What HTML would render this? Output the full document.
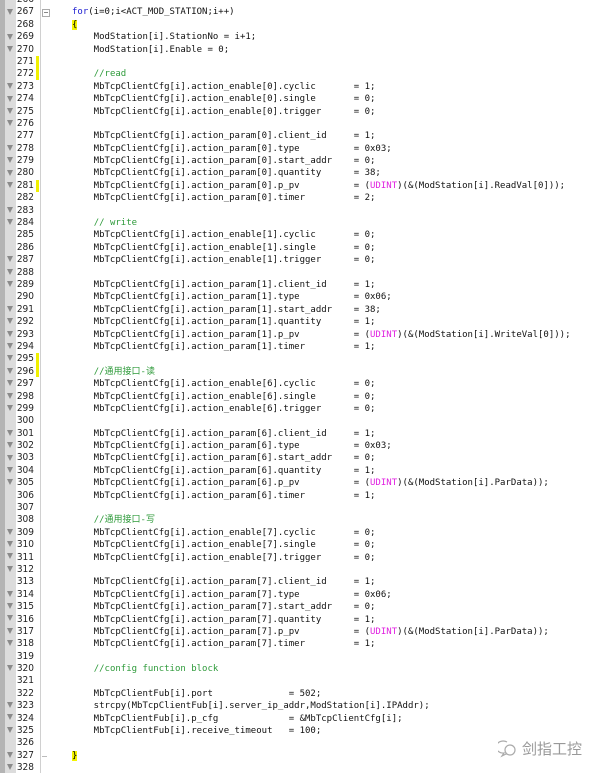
<!DOCTYPE html>
<html><head><meta charset="utf-8"><style>
*{margin:0;padding:0}
body{width:600px;height:773px;background:#fff;overflow:hidden;position:relative;font-family:"DejaVu Sans Mono","Liberation Mono","Noto Sans CJK SC",monospace;font-size:9px;color:#111}
#bar{position:absolute;left:0;top:0;width:16px;height:773px;background:#dcdcdc;border-left:5px solid #b4b4b4;box-sizing:border-box}
#vl{position:absolute;left:40px;top:0;width:1px;height:773px;background:#d0d0d0}
#nums{position:absolute;left:16px;top:-6px;width:18px;text-align:right;line-height:12.39px;font-family:"Liberation Sans Narrow","DejaVu Sans Condensed","Liberation Sans",sans-serif;font-size:10px;color:#222}
#code{position:absolute;left:72px;top:-6px;line-height:12.39px;white-space:pre}
.t{position:absolute;left:7px;width:0;height:0;border-left:3.5px solid transparent;border-right:3.5px solid transparent;border-top:6px solid #8a8a8a}
.y{position:absolute;left:36px;width:3px;background:#f0f000}
.k{color:#1a1ad0}.c{color:#2e9a3a}.m{color:#e020e0}.h{background:#f4f400;color:#000}
#wm{position:absolute;left:522px;top:738px;font-family:"Noto Sans CJK SC",sans-serif;font-size:15px;color:#999}
</style></head><body>
<div id="bar"></div><div id="vl"></div>
<div style="position:absolute;left:42px;top:9px;width:6px;height:6px;border:1px solid #aaa"></div>
<div style="position:absolute;left:44px;top:12px;width:4px;height:1px;background:#888"></div>
<div style="position:absolute;left:42px;top:756px;width:5px;height:1px;background:#bbb"></div>
<div class="y" style="top:56px;height:24px"></div>
<div class="y" style="top:180px;height:12px"></div>
<div class="y" style="top:353px;height:24px"></div>
<div id="nums">266<br>267<br>268<br>269<br>270<br>271<br>272<br>273<br>274<br>275<br>276<br>277<br>278<br>279<br>280<br>281<br>282<br>283<br>284<br>285<br>286<br>287<br>288<br>289<br>290<br>291<br>292<br>293<br>294<br>295<br>296<br>297<br>298<br>299<br>300<br>301<br>302<br>303<br>304<br>305<br>306<br>307<br>308<br>309<br>310<br>311<br>312<br>313<br>314<br>315<br>316<br>317<br>318<br>319<br>320<br>321<br>322<br>323<br>324<br>325<br>326<br>327<br>328</div>
<div class="t" style="top:9px"></div><div class="t" style="top:34px"></div><div class="t" style="top:46px"></div>
<div class="t" style="top:83px"></div><div class="t" style="top:96px"></div><div class="t" style="top:108px"></div><div class="t" style="top:120px"></div>
<div class="t" style="top:145px"></div><div class="t" style="top:157px"></div><div class="t" style="top:170px"></div><div class="t" style="top:182px"></div>
<div class="t" style="top:207px"></div><div class="t" style="top:219px"></div><div class="t" style="top:256px"></div><div class="t" style="top:269px"></div>
<div class="t" style="top:281px"></div><div class="t" style="top:306px"></div><div class="t" style="top:318px"></div><div class="t" style="top:331px"></div><div class="t" style="top:343px"></div><div class="t" style="top:355px"></div><div class="t" style="top:368px"></div>
<div class="t" style="top:380px"></div><div class="t" style="top:393px"></div><div class="t" style="top:405px"></div>
<div class="t" style="top:430px"></div><div class="t" style="top:442px"></div><div class="t" style="top:455px"></div><div class="t" style="top:467px"></div><div class="t" style="top:479px"></div>
<div class="t" style="top:529px"></div><div class="t" style="top:541px"></div><div class="t" style="top:553px"></div><div class="t" style="top:566px"></div>
<div class="t" style="top:591px"></div><div class="t" style="top:603px"></div><div class="t" style="top:615px"></div><div class="t" style="top:628px"></div><div class="t" style="top:640px"></div>
<div class="t" style="top:665px"></div><div class="t" style="top:702px"></div><div class="t" style="top:714px"></div><div class="t" style="top:727px"></div><div class="t" style="top:752px"></div><div class="t" style="top:764px"></div>
<div id="code">
<span class="k">for</span>(i=0;i&lt;ACT_MOD_STATION;i++)
<span class="h">{</span>
    ModStation[i].StationNo = i+1;
    ModStation[i].Enable = 0;

    <span class="c">//read</span>
    MbTcpClientCfg[i].action_enable[0].cyclic       = 1;
    MbTcpClientCfg[i].action_enable[0].single       = 0;
    MbTcpClientCfg[i].action_enable[0].trigger      = 0;

    MbTcpClientCfg[i].action_param[0].client_id     = 1;
    MbTcpClientCfg[i].action_param[0].type          = 0x03;
    MbTcpClientCfg[i].action_param[0].start_addr    = 0;
    MbTcpClientCfg[i].action_param[0].quantity      = 38;
    MbTcpClientCfg[i].action_param[0].p_pv          = (<span class="m">UDINT</span>)(&amp;(ModStation[i].ReadVal[0]));
    MbTcpClientCfg[i].action_param[0].timer         = 2;

    <span class="c">// write</span>
    MbTcpClientCfg[i].action_enable[1].cyclic       = 0;
    MbTcpClientCfg[i].action_enable[1].single       = 0;
    MbTcpClientCfg[i].action_enable[1].trigger      = 0;

    MbTcpClientCfg[i].action_param[1].client_id     = 1;
    MbTcpClientCfg[i].action_param[1].type          = 0x06;
    MbTcpClientCfg[i].action_param[1].start_addr    = 38;
    MbTcpClientCfg[i].action_param[1].quantity      = 1;
    MbTcpClientCfg[i].action_param[1].p_pv          = (<span class="m">UDINT</span>)(&amp;(ModStation[i].WriteVal[0]));
    MbTcpClientCfg[i].action_param[1].timer         = 1;

    <span class="c">//通用接口-读</span>
    MbTcpClientCfg[i].action_enable[6].cyclic       = 0;
    MbTcpClientCfg[i].action_enable[6].single       = 0;
    MbTcpClientCfg[i].action_enable[6].trigger      = 0;

    MbTcpClientCfg[i].action_param[6].client_id     = 1;
    MbTcpClientCfg[i].action_param[6].type          = 0x03;
    MbTcpClientCfg[i].action_param[6].start_addr    = 0;
    MbTcpClientCfg[i].action_param[6].quantity      = 1;
    MbTcpClientCfg[i].action_param[6].p_pv          = (<span class="m">UDINT</span>)(&amp;(ModStation[i].ParData));
    MbTcpClientCfg[i].action_param[6].timer         = 1;

    <span class="c">//通用接口-写</span>
    MbTcpClientCfg[i].action_enable[7].cyclic       = 0;
    MbTcpClientCfg[i].action_enable[7].single       = 0;
    MbTcpClientCfg[i].action_enable[7].trigger      = 0;

    MbTcpClientCfg[i].action_param[7].client_id     = 1;
    MbTcpClientCfg[i].action_param[7].type          = 0x06;
    MbTcpClientCfg[i].action_param[7].start_addr    = 0;
    MbTcpClientCfg[i].action_param[7].quantity      = 1;
    MbTcpClientCfg[i].action_param[7].p_pv          = (<span class="m">UDINT</span>)(&amp;(ModStation[i].ParData));
    MbTcpClientCfg[i].action_param[7].timer         = 1;

    <span class="c">//config function block</span>

    MbTcpClientFub[i].port              = 502;
    strcpy(MbTcpClientFub[i].server_ip_addr,ModStation[i].IPAddr);
    MbTcpClientFub[i].p_cfg             = &amp;MbTcpClientCfg[i];
    MbTcpClientFub[i].receive_timeout   = 100;

<span class="h">}</span>
</div>
<svg style="position:absolute;left:498px;top:740px" width="20" height="18" viewBox="0 0 20 18"><path d="M9 2a7 6 0 1 0 -3 11l-2 3 4-2a7 6 0 0 0 1 0" fill="none" stroke="#aaa" stroke-width="1.2"/><circle cx="12" cy="10" r="5" fill="none" stroke="#aaa" stroke-width="1.2"/></svg>
<div id="wm">剑指工控</div>
</body></html>
